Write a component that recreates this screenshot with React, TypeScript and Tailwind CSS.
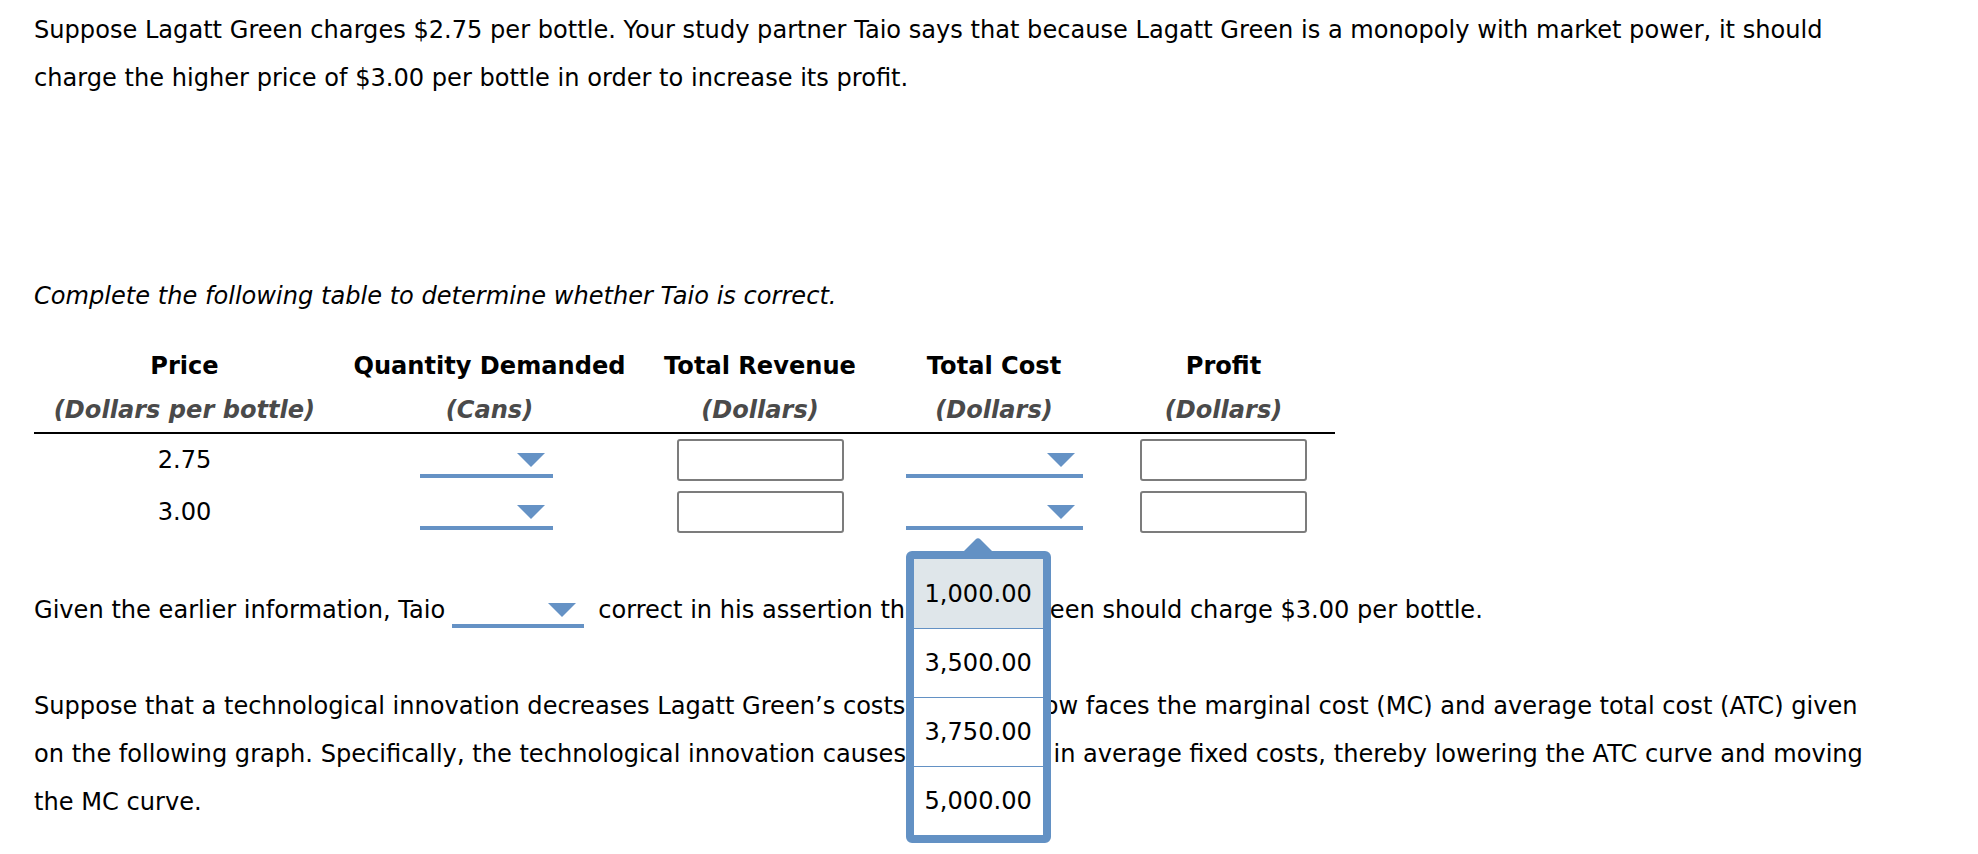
import React from 'react';

function Arrow() {
  return (
    <svg width="28" height="14" viewBox="0 0 28 14" className="block shrink-0">
      <polygon points="0,0 28,0 14,14" fill="#6592c5" />
    </svg>
  );
}

// underline-style select with the little down arrow on the right
function Dropdown({ className = '' }: { className?: string }) {
  return (
    <span className={`flex h-[36px] items-center justify-end border-b-4 border-[#6592c5] pr-2 pt-1 ${className}`}>
      <Arrow />
    </span>
  );
}

function InputBox() {
  return <span className="block h-[42px] w-[167px] rounded-[3px] border-2 border-[#7c7c7c] bg-white" />;
}

const options = ['1,000.00', '3,500.00', '3,750.00', '5,000.00'];

function OptionsPopup() {
  return (
    <div className="absolute left-0 top-[57px] z-10 w-[145px]">
      <svg width="28" height="14" viewBox="0 0 28 14" className="absolute -top-[14px] left-1/2 block -translate-x-1/2">
        <path d="M0 14 L11.5 2.5 Q14 0 16.5 2.5 L28 14 Z" fill="#6391c4" />
      </svg>
      <div className="overflow-hidden rounded-[6px] border-8 border-[#6391c4] bg-white">
        {options.map((o, i) => (
          <div
            key={o}
            className={`flex h-[69px] items-center pl-[11px] ${i > 0 ? 'border-t border-[#6391c4]' : ''} ${i === 0 ? 'bg-[#dfe6ea]' : 'bg-white'}`}
          >
            {o}
          </div>
        ))}
      </div>
    </div>
  );
}

function HeaderCell({ title, unit }: { title: string; unit: string }) {
  return (
    <div className="flex flex-col items-center">
      <div className="h-[44px] font-bold leading-[44px]">{title}</div>
      <div className="h-[44px] font-bold italic leading-[44px] text-[#4a4a4a]">{unit}</div>
    </div>
  );
}

export default function App() {
  return (
    <div className="min-h-screen bg-white pl-[34px] pt-[6px] font-['DejaVu_Sans',sans-serif] text-[24.1px] leading-[48px] text-black">
      <div className="w-[1841px]">
        <p>
          Suppose Lagatt Green charges $2.75 per bottle. Your study partner Taio says that because Lagatt Green is a
          monopoly with market power, it should charge the higher price of $3.00 per bottle in order to increase its
          profit.
        </p>

        <p className="mt-[170px] italic">Complete the following table to determine whether Taio is correct.</p>

        {/* table */}
        <div className="mt-6 w-[1301px]">
          <div className="grid grid-cols-[301px_309px_232px_236px_223px] border-b-2 border-black">
            <HeaderCell title="Price" unit="(Dollars per bottle)" />
            <HeaderCell title="Quantity Demanded" unit="(Cans)" />
            <HeaderCell title="Total Revenue" unit="(Dollars)" />
            <HeaderCell title="Total Cost" unit="(Dollars)" />
            <HeaderCell title="Profit" unit="(Dollars)" />
          </div>

          {['2.75', '3.00'].map((price, i) => (
            <div key={price} className="grid h-[52px] grid-cols-[301px_309px_232px_236px_223px] items-center">
              <div className="text-center">{price}</div>
              <div className="flex justify-center">
                <Dropdown className="mr-[6px] w-[133px]" />
              </div>
              <div className="flex justify-center">
                <InputBox />
              </div>
              <div className="flex justify-center">
                <div className="relative">
                  <Dropdown className="w-[177px]" />
                  {i === 1 && <OptionsPopup />}
                </div>
              </div>
              <div className="flex justify-center">
                <InputBox />
              </div>
            </div>
          ))}
        </div>

        <div className="mt-[48px] flex h-[48px] items-center whitespace-nowrap">
          <span>Given the earlier information, Taio</span>
          <Dropdown className="ml-[7px] w-[132px]" />
          <span className="ml-[14px]">correct in his assertion that Lagatt Green should charge $3.00 per bottle.</span>
        </div>

        <p className="mt-[48px]">
          Suppose that a technological innovation decreases Lagatt Green’s costs so that it now faces the marginal cost
          (MC) and average total cost (ATC) given on the following graph. Specifically, the technological innovation
          causes a decrease in average fixed costs, thereby lowering the ATC curve and moving the MC curve.
        </p>
      </div>
    </div>
  );
}
